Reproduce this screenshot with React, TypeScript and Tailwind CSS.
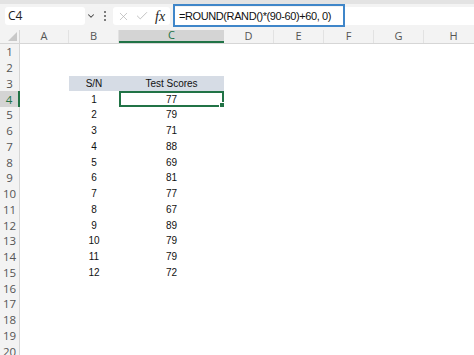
import { ChevronDown, X, Check } from "lucide-react";

const cols = [
  { l: "A", w: "w-[50px]" },
  { l: "B", w: "w-[50px]" },
  { l: "C", w: "w-[105px]" },
  { l: "D", w: "w-[50px]" },
  { l: "E", w: "w-[50px]" },
  { l: "F", w: "w-[50px]" },
  { l: "G", w: "w-[50px]" },
  { l: "H", w: "w-[60px]" },
];

const scores = [77, 79, 71, 88, 69, 81, 77, 67, 89, 79, 79, 72];

function Row({ n }: { n: number }) {
  const dataIdx = n - 4;
  const isHead = n === 3;
  const isData = dataIdx >= 0 && dataIdx < scores.length;
  const active = n === 4;
  return (
    <div className="flex h-[15.75px]">
      <div
        className={
          active
            ? "w-[20px] shrink-0 bg-[#d4d4d4] border-r-2 border-[#217346] text-[#217346] flex items-center justify-center"
            : "w-[20px] shrink-0 bg-[#f3f3f3] border-r border-[#d6d6d6] text-[#555] flex items-center justify-center"
        }
      >
        <span className="text-[11.5px]">{n}</span>
      </div>
      {/* A */}
      <div className="w-[49px] shrink-0" />
      {/* B */}
      <div
        className={
          isHead
            ? "w-[50px] shrink-0 bg-[#d6dce5] flex items-center justify-center"
            : "w-[50px] shrink-0 flex items-center justify-center"
        }
      >
        {isHead && <span className="cell">S/N</span>}
        {isData && <span className="cell">{dataIdx + 1}</span>}
      </div>
      {/* C */}
      <div
        className={
          isHead
            ? "w-[105px] shrink-0 bg-[#d6dce5] flex items-center justify-center"
            : active
            ? "w-[105px] shrink-0 border-2 border-[#217346] flex items-center justify-center relative"
            : "w-[105px] shrink-0 flex items-center justify-center"
        }
      >
        {isHead && <span className="cell">Test Scores</span>}
        {isData && <span className="cell">{scores[dataIdx]}</span>}
        {active && (
          <div className="absolute right-[-3px] bottom-[-3px] w-[4px] h-[4px] bg-[#217346] border border-white box-content" />
        )}
      </div>
    </div>
  );
}

export default function App() {
  return (
    <div
      className="w-[474px] h-[355px] overflow-hidden bg-white"
      style={{ fontFamily: "'Open Sans', 'Noto Sans', sans-serif" }}
    >
      <style>{`.cell{font-family:'Liberation Sans',Arial,sans-serif;font-size:10px;color:#111;}`}</style>

      {/* Formula Bar */}
      <div className="h-[4px] bg-[#e3e3e3]" />
      <div className="h-[24px] bg-[#f3f3f3] flex items-center">
        <div className="ml-[5px] w-[80px] h-[18px] bg-white rounded-[3px] flex items-center pl-[3px]">
          <span className="text-[12px] text-[#222]">C4</span>
        </div>
        <ChevronDown className="ml-[1px] w-[10px] h-[10px] text-[#444]" strokeWidth={2.5} />
        <div className="ml-[8px] flex flex-col gap-[2px]">
          <div className="w-[2px] h-[2px] bg-[#555] rounded-full" />
          <div className="w-[2px] h-[2px] bg-[#555] rounded-full" />
          <div className="w-[2px] h-[2px] bg-[#555] rounded-full" />
        </div>
        <div className="ml-[7px] w-[57px] h-[18px] bg-white rounded-[3px] flex items-center pl-[4px] gap-[5px]">
          <X className="w-[13px] h-[13px] text-[#b0b0b0]" strokeWidth={1.3} />
          <Check className="w-[14px] h-[14px] text-[#b0b0b0]" strokeWidth={1.3} />
          <span
            className="text-[14px] italic text-[#222] ml-[1px]"
            style={{ fontFamily: "'Liberation Serif', serif" }}
          >
            fx
          </span>
        </div>
        <div className="ml-[3px] flex-1 h-[18px] bg-white flex items-center relative">
          <div className="absolute left-0 top-[-3px] w-[172px] h-[23px] border-2 border-[#3f86c9]" />
          <span
            className="pl-[6px] text-[11px] tracking-[-0.4px] text-[#111]"
            style={{ fontFamily: "'Liberation Sans', Arial, sans-serif" }}
          >
            =ROUND(RAND()*(90-60)+60, 0)
          </span>
        </div>
      </div>
      <div className="h-[2px] bg-[#f3f3f3]" />

      {/* Column headers */}
      <div className="flex h-[14px] bg-[#f3f3f3] border-b border-[#d6d6d6]">
        <div className="w-[20px] shrink-0 relative border-r border-[#d6d6d6]">
          <div className="absolute right-[2px] bottom-[2px] w-0 h-0 border-l-[9px] border-l-transparent border-b-[9px] border-b-[#c8c8c8]" />
        </div>
        {cols.map((c) =>
          c.l === "C" ? (
            <div
              key={c.l}
              className={`${c.w} shrink-0 bg-[#d4d4d4] border-b-2 border-[#217346] flex items-center justify-center text-[11px] text-[#217346]`}
            >
              {c.l}
            </div>
          ) : (
            <div
              key={c.l}
              className={`${c.l === "A" ? "w-[49px]" : c.w} shrink-0 border-r border-[#e2e2e2] flex items-center justify-center text-[11px] text-[#555]`}
            >
              {c.l}
            </div>
          )
        )}
      </div>

      {/* Rows */}
      {Array.from({ length: 20 }, (_, i) => (
        <Row key={i} n={i + 1} />
      ))}
    </div>
  );
}
